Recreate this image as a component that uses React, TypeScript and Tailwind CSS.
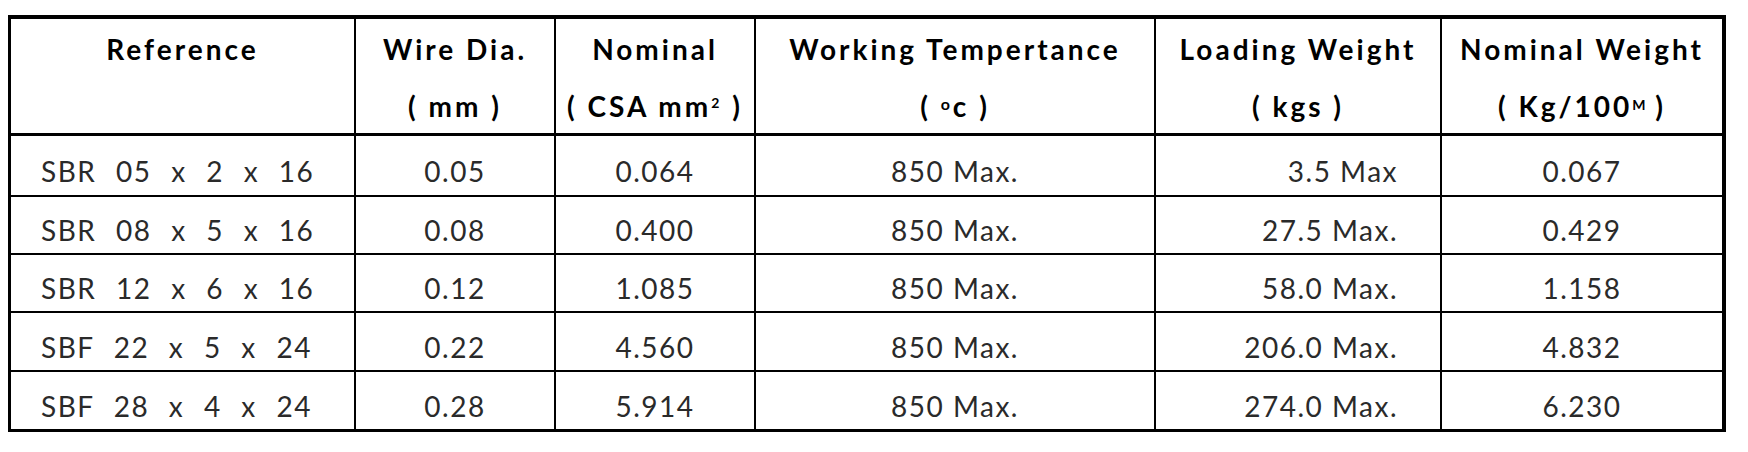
import React from "react";

const rows = [
  ["SBR", "05", "2", "16", "0.05", "0.064", "850 Max.", "3.5 Max", "0.067"],
  ["SBR", "08", "5", "16", "0.08", "0.400", "850 Max.", "27.5 Max.", "0.429"],
  ["SBR", "12", "6", "16", "0.12", "1.085", "850 Max.", "58.0 Max.", "1.158"],
  ["SBF", "22", "5", "24", "0.22", "4.560", "850 Max.", "206.0 Max.", "4.832"],
  ["SBF", "28", "4", "24", "0.28", "5.914", "850 Max.", "274.0 Max.", "6.230"],
];

const rowH = [
  "h-[61px] border-b-2",
  "h-[58px] border-b-2",
  "h-[58px] border-b-2",
  "h-[59px] border-b-2",
  "h-[57px]",
];

const cols = "grid grid-cols-[345px_200px_200px_400px_286px_280px]";

function HeadCell({ l1, l2, last }: { l1: React.ReactNode; l2?: React.ReactNode; last?: boolean }) {
  return (
    <div
      className={
        "flex flex-col items-center text-center leading-[57px] pt-[2px] whitespace-nowrap " +
        (last ? "" : "border-r-2 border-black")
      }
    >
      <span>{l1}</span>
      <span>{l2 ?? "\u00a0"}</span>
    </div>
  );
}

export default function App() {
  return (
    <div className="w-[1748px] h-[452px] bg-white pt-[15px] pl-[8px]">
      <div
        className="w-[1718px] border-t-4 border-l-[3px] border-r-4 border-b-[3px] border-black text-black"
        style={{ fontFamily: "Lato, 'Noto Sans', sans-serif" }}
      >
        <div className={cols + " h-[117px] border-b-[3px] border-black text-[28px] font-bold tracking-[3px]"}>
          <HeadCell l1="Reference" />
          <HeadCell l1="Wire Dia." l2="( mm )" />
          <HeadCell
            l1="Nominal"
            l2={
              <>
                ( CSA mm<span className="text-[14px] relative -top-[9px]">2</span> )
              </>
            }
          />
          <HeadCell
            l1="Working Tempertance"
            l2={
              <>
                ( <span className="text-[16px] relative -top-[7px]">o</span>c )
              </>
            }
          />
          <HeadCell l1="Loading Weight" l2="( kgs )" />
          <HeadCell
            l1="Nominal Weight"
            l2={
              <>
                ( Kg/100<span className="text-[14px] relative -top-[7px] tracking-normal">M</span> )
              </>
            }
            last
          />
        </div>
        {rows.map((r, i) => (
          <div
            key={i}
            className={cols + " text-[28px] text-[#2a2a2a] tracking-[1.5px] border-black " + rowH[i]}
          >
            <div className="flex items-center pt-[10px] pl-[30px] border-r-2 border-black [word-spacing:11px] whitespace-nowrap">
              {r[0]} {r[1]} x {r[2]} x {r[3]}
            </div>
            <div className="flex items-center justify-center pt-[10px] border-r-2 border-black">{r[4]}</div>
            <div className="flex items-center justify-center pt-[10px] border-r-2 border-black">{r[5]}</div>
            <div className="flex items-center justify-center pt-[10px] border-r-2 border-black">{r[6]}</div>
            <div className="flex items-center justify-end pt-[10px] pr-[42px] border-r-2 border-black whitespace-nowrap">
              {r[7]}
            </div>
            <div className="flex items-center justify-center pt-[10px]">{r[8]}</div>
          </div>
        ))}
      </div>
    </div>
  );
}
